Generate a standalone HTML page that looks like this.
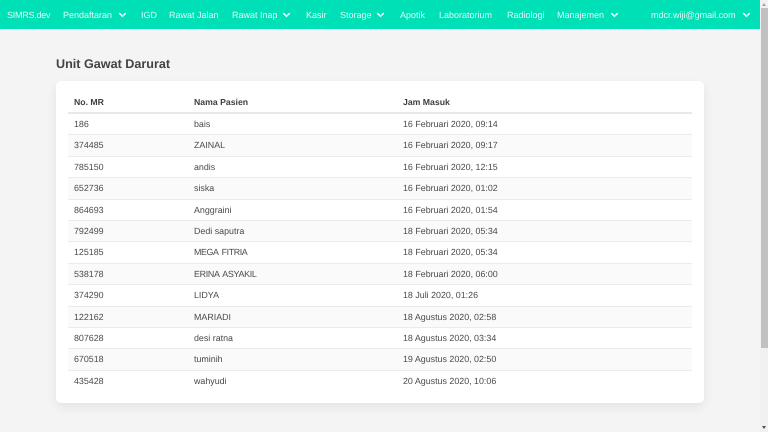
<!DOCTYPE html>
<html lang="id">
<head>
<meta charset="utf-8">
<title>Unit Gawat Darurat</title>
<style>
html,body{margin:0;padding:0;width:768px;height:432px;overflow:hidden;background:#f4f4f4;font-family:"Liberation Sans",sans-serif;color:#4a4a4a;text-rendering:geometricPrecision}
.nav{position:absolute;left:0;top:0;width:760px;height:29px;background:#00e0b7}
.nav span{position:absolute;top:8px;font-size:9px;line-height:14px;color:#e0faf4;white-space:nowrap}
.nav svg{position:absolute;top:12px;width:9px;height:6px}
h1{position:absolute;left:56px;top:55px;margin:0;font-size:12.600px;line-height:18px;font-weight:bold;color:#424242;white-space:nowrap}
.card{position:absolute;left:56px;top:81px;width:648px;height:322px;background:#fff;border-radius:5px;box-shadow:0 4px 10px rgba(0,0,0,.07)}
.hd{position:absolute;left:12px;top:31px;width:624px;height:2px;background:#e8e8e8}
.row{position:absolute;left:12px;width:624px;height:21.4px;box-sizing:border-box;border-bottom:1px solid #ebebeb}
.row.s{background:#fafafa}
.row.l{border-bottom:0}
.row b,.row i{position:absolute;top:3px;font-style:normal;font-size:8.900px;line-height:14px;white-space:nowrap}
.row i{color:#4a4a4a}
.row b{color:#3f3f3f;font-weight:bold;font-size:8.700px}
.a{left:6px}.b{left:126px}.c{left:335px}
.sb{position:absolute;left:760px;top:0;width:8px;height:432px;background:#f1f1f1}
.th{position:absolute;left:761px;top:8px;width:7px;height:340px;background:#c1c1c1}
.up,.dn{position:absolute;left:762px;width:0;height:0;border-left:2.5px solid transparent;border-right:2.5px solid transparent}
.up{top:3px;border-bottom:3px solid #a3a3a3}
.dn{top:426px;border-top:3px solid #505050}
</style>
</head>
<body>
<div class="nav">
<span style="left:7px;letter-spacing:-.25px">SIMRS.dev</span>
<span style="left:63px">Pendaftaran</span>
<svg style="left:117.500px" viewBox="0 0 9 6"><path d="M1.300 1.200l3.200 3 3.200-3" fill="none" stroke="#fff" stroke-width="1.500"/></svg>
<span style="left:141px">IGD</span>
<span style="left:169px">Rawat Jalan</span>
<span style="left:232px">Rawat Inap</span>
<svg style="left:281.500px" viewBox="0 0 9 6"><path d="M1.300 1.200l3.200 3 3.200-3" fill="none" stroke="#fff" stroke-width="1.500"/></svg>
<span style="left:306px">Kasir</span>
<span style="left:340px">Storage</span>
<svg style="left:376px" viewBox="0 0 9 6"><path d="M1.300 1.200l3.200 3 3.200-3" fill="none" stroke="#fff" stroke-width="1.500"/></svg>
<span style="left:400px">Apotik</span>
<span style="left:439px">Laboratorium</span>
<span style="left:507px">Radiologi</span>
<span style="left:557px">Manajemen</span>
<svg style="left:609.500px" viewBox="0 0 9 6"><path d="M1.300 1.200l3.200 3 3.200-3" fill="none" stroke="#fff" stroke-width="1.500"/></svg>
<span style="left:651px">mdcr.wiji@gmail.com</span>
<svg style="left:742px" viewBox="0 0 9 6"><path d="M1.300 1.200l3.200 3 3.200-3" fill="none" stroke="#fff" stroke-width="1.500"/></svg>
</div>

<h1>Unit Gawat Darurat</h1>

<div class="card">
<div class="row l" style="top:11px"><b class="a">No. MR</b><b class="b">Nama Pasien</b><b class="c">Jam Masuk</b></div>
<div class="hd"></div>
<div class="row" style="top:33px"><i class="a">186</i><i class="b">bais</i><i class="c">16 Februari 2020, 09:14</i></div>
<div class="row s" style="top:54.400px"><i class="a">374485</i><i class="b">ZAINAL</i><i class="c">16 Februari 2020, 09:17</i></div>
<div class="row" style="top:75.800px"><i class="a">785150</i><i class="b">andis</i><i class="c">16 Februari 2020, 12:15</i></div>
<div class="row s" style="top:97.200px"><i class="a">652736</i><i class="b">siska</i><i class="c">16 Februari 2020, 01:02</i></div>
<div class="row" style="top:118.600px"><i class="a">864693</i><i class="b">Anggraini</i><i class="c">16 Februari 2020, 01:54</i></div>
<div class="row s" style="top:140px"><i class="a">792499</i><i class="b">Dedi saputra</i><i class="c">18 Februari 2020, 05:34</i></div>
<div class="row" style="top:161.400px"><i class="a">125185</i><i class="b" style="letter-spacing:-.4px;word-spacing:1.500px">MEGA FITRIA</i><i class="c">18 Februari 2020, 05:34</i></div>
<div class="row s" style="top:182.800px"><i class="a">538178</i><i class="b" style="letter-spacing:-.3px;word-spacing:1.500px">ERINA ASYAKIL</i><i class="c">18 Februari 2020, 06:00</i></div>
<div class="row" style="top:204.200px"><i class="a">374290</i><i class="b">LIDYA</i><i class="c">18 Juli 2020, 01:26</i></div>
<div class="row s" style="top:225.600px"><i class="a">122162</i><i class="b">MARIADI</i><i class="c">18 Agustus 2020, 02:58</i></div>
<div class="row" style="top:247px"><i class="a">807628</i><i class="b">desi ratna</i><i class="c">18 Agustus 2020, 03:34</i></div>
<div class="row s" style="top:268.400px"><i class="a">670518</i><i class="b">tuminih</i><i class="c">19 Agustus 2020, 02:50</i></div>
<div class="row l" style="top:289.800px"><i class="a">435428</i><i class="b">wahyudi</i><i class="c">20 Agustus 2020, 10:06</i></div>
</div>

<div class="sb"></div>
<div class="up"></div>
<div class="th"></div>
<div class="dn"></div>
</body>
</html>
